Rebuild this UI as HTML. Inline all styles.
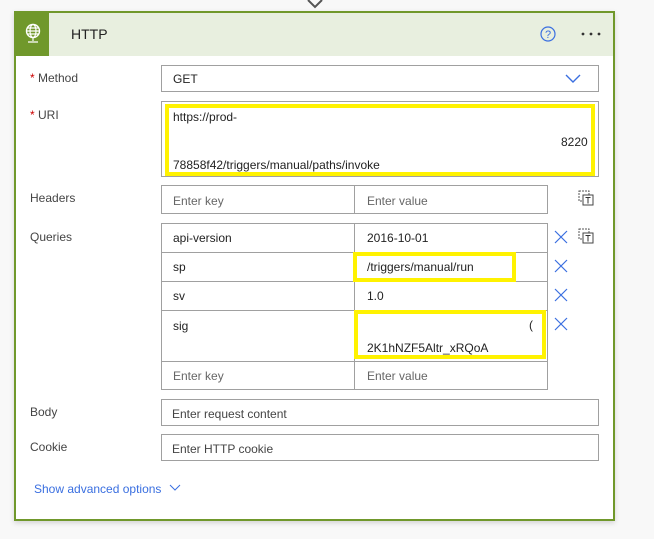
<!DOCTYPE html>
<html><head><style>
body{margin:0;width:654px;height:539px;background:#f8f8f8;font-family:"Liberation Sans",sans-serif;font-size:12px;color:#222;position:relative;overflow:hidden}
.a{position:absolute}
.card{left:14px;top:11px;width:597px;height:506px;background:#fff;border:2px solid #70982b;box-shadow:0 2px 5px rgba(0,0,0,.15)}
.box{position:absolute;border:1px solid #a0a0a0;box-sizing:border-box;background:#fff}
.lbl{position:absolute;color:#444}
.ph{color:#666}
.y{position:absolute;border:4px solid #fff200;box-sizing:border-box}
</style></head><body>
<svg class="a" style="left:305px;top:0" width="20" height="10"><path d="M3 0 L10 7 L17 0" stroke="#555" stroke-width="2" fill="none"/></svg>
<div class="a card"></div>
<div class="a" style="left:16px;top:13px;width:597px;height:43px;background:#e8efdf"></div>
<div class="a" style="left:16px;top:13px;width:33px;height:43px;background:#70982b"></div>
<svg class="a" style="left:25px;top:23px" width="16" height="22"><circle cx="8" cy="8" r="6.5" stroke="#fff" stroke-width="1.4" fill="none"/><ellipse cx="8" cy="8" rx="3" ry="6.5" stroke="#fff" stroke-width="1.2" fill="none"/><path d="M1.5 8h13M2.5 5h11M2.5 11h11M8 15v3M3 19h10" stroke="#fff" stroke-width="1.2"/></svg>
<div class="a" style="left:71px;top:26px;font-size:14px;color:#222">HTTP</div>
<svg class="a" style="left:540px;top:26px" width="16" height="16"><circle cx="8" cy="8" r="7" stroke="#3a6fe0" stroke-width="1.2" fill="none"/><text x="8" y="12" font-size="11" text-anchor="middle" fill="#3a6fe0" font-family="Liberation Sans">?</text></svg>
<svg class="a" style="left:580px;top:31px" width="22" height="6"><circle cx="3" cy="3" r="1.4" fill="#333"/><circle cx="11" cy="3" r="1.4" fill="#333"/><circle cx="19" cy="3" r="1.4" fill="#333"/></svg>

<div class="lbl" style="left:30px;top:71px"><span style="color:#c00">*</span> Method</div>
<div class="box" style="left:161px;top:65px;width:438px;height:27px"><span class="a" style="left:11px;top:6px">GET</span>
<svg class="a" style="left:403px;top:8px" width="16" height="10"><path d="M1 1l7 7 7-7" stroke="#3a6fe0" stroke-width="1.4" fill="none"/></svg></div>

<div class="lbl" style="left:30px;top:108px"><span style="color:#c00">*</span> URI</div>
<div class="box" style="left:161px;top:101px;width:438px;height:76px"></div>
<div class="y" style="left:165px;top:104px;width:430px;height:72px"></div>
<div class="a" style="left:173px;top:110px">https://prod-</div>
<div class="a" style="left:561px;top:135px">8220</div>
<div class="a" style="left:173px;top:158px">78858f42/triggers/manual/paths/invoke</div>

<div class="lbl" style="left:30px;top:191px">Headers</div>
<div class="box" style="left:161px;top:185px;width:194px;height:29px"><span class="a ph" style="left:11px;top:8px">Enter key</span></div>
<div class="box" style="left:354px;top:185px;width:194px;height:29px"><span class="a ph" style="left:12px;top:8px">Enter value</span></div>
<svg class="a" style="left:578px;top:190px" width="16" height="16"><rect x="1" y="1" width="10" height="10" stroke="#555" stroke-dasharray="2 1" fill="none"/><rect x="5" y="5" width="10" height="10" stroke="#444" fill="#fff"/><path d="M7.5 7.5h5M10 7.5v6" stroke="#333"/></svg>

<div class="lbl" style="left:30px;top:230px">Queries</div>
<div class="box" style="left:161px;top:223px;width:387px;height:167px"></div>
<div class="a" style="left:354px;top:223px;width:1px;height:167px;background:#a0a0a0"></div>
<div class="a" style="left:161px;top:252px;width:387px;height:1px;background:#a0a0a0"></div>
<div class="a" style="left:161px;top:281px;width:387px;height:1px;background:#a0a0a0"></div>
<div class="a" style="left:161px;top:310px;width:387px;height:1px;background:#a0a0a0"></div>
<div class="a" style="left:161px;top:361px;width:387px;height:1px;background:#a0a0a0"></div>
<div class="a" style="left:173px;top:231px">api-version</div><div class="a" style="left:367px;top:231px">2016-10-01</div>
<div class="a" style="left:173px;top:260px">sp</div>
<div class="y" style="left:353px;top:252px;width:163px;height:30px"></div>
<div class="a" style="left:367px;top:260px">/triggers/manual/run</div>
<div class="a" style="left:173px;top:289px">sv</div><div class="a" style="left:367px;top:289px">1.0</div>
<div class="a" style="left:173px;top:319px">sig</div>
<div class="y" style="left:354px;top:310px;width:192px;height:49px"></div>
<div class="a" style="left:529px;top:318px">(</div>
<div class="a" style="left:367px;top:341px">2K1hNZF5Altr_xRQoA</div>
<div class="a ph" style="left:173px;top:369px">Enter key</div><div class="a ph" style="left:367px;top:369px">Enter value</div>
<svg class="a" style="left:554px;top:230px" width="14" height="14"><path d="M1 1l12 12M13 1L1 13" stroke="#3a6fe0" stroke-width="1.2"/></svg>
<svg class="a" style="left:578px;top:228px" width="16" height="16"><rect x="1" y="1" width="10" height="10" stroke="#555" stroke-dasharray="2 1" fill="none"/><rect x="5" y="5" width="10" height="10" stroke="#444" fill="#fff"/><path d="M7.5 7.5h5M10 7.5v6" stroke="#333"/></svg>
<svg class="a" style="left:554px;top:259px" width="14" height="14"><path d="M1 1l12 12M13 1L1 13" stroke="#3a6fe0" stroke-width="1.2"/></svg>
<svg class="a" style="left:554px;top:288px" width="14" height="14"><path d="M1 1l12 12M13 1L1 13" stroke="#3a6fe0" stroke-width="1.2"/></svg>
<svg class="a" style="left:554px;top:317px" width="14" height="14"><path d="M1 1l12 12M13 1L1 13" stroke="#3a6fe0" stroke-width="1.2"/></svg>

<div class="lbl" style="left:30px;top:405px">Body</div>
<div class="box" style="left:161px;top:399px;width:438px;height:27px"><span class="a" style="left:10px;top:7px;color:#444">Enter request content</span></div>
<div class="lbl" style="left:30px;top:440px">Cookie</div>
<div class="box" style="left:161px;top:434px;width:438px;height:27px"><span class="a" style="left:10px;top:7px;color:#444">Enter HTTP cookie</span></div>
<div class="a" style="left:34px;top:482px;color:#3a6fe0">Show advanced options</div>
<svg class="a" style="left:169px;top:484px" width="12" height="8"><path d="M1 1l5 5 5-5" stroke="#3a6fe0" stroke-width="1" fill="none"/></svg>
</body></html>
